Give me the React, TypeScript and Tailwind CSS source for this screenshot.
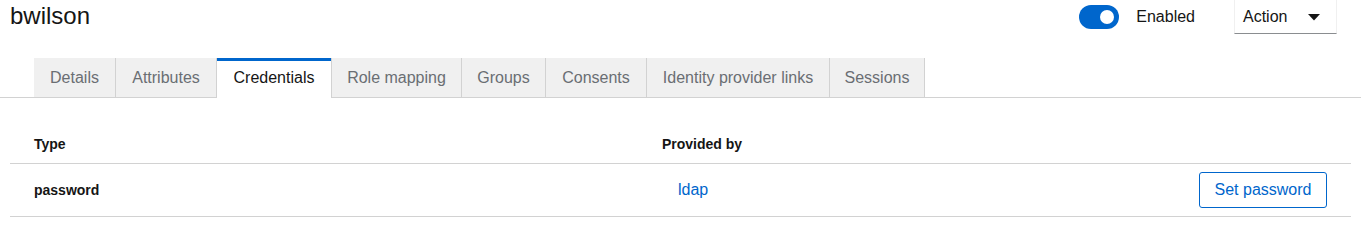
const tabs = [
  { label: "Details", w: "w-[82px]" },
  { label: "Attributes", w: "w-[101px]" },
  { label: "Credentials", w: "w-[115px]" },
  { label: "Role mapping", w: "w-[130px]" },
  { label: "Groups", w: "w-[84px]" },
  { label: "Consents", w: "w-[101px]" },
  { label: "Identity provider links", w: "w-[183px]" },
  { label: "Sessions", w: "w-[95px]" },
];

const font = { fontFamily: '"Liberation Sans", Arial, sans-serif' };

export default function App() {
  const active = "Credentials";

  return (
    <div className="w-[1361px] h-[250px] overflow-hidden bg-white text-[#151515]" style={font}>
      {/* page header */}
      <div className="-mt-[3px] flex items-center h-[37px] pl-[10px] pr-6">
        <h1 className="text-[24px] leading-none">bwilson</h1>
        <div className="ml-auto flex items-center mt-[3px]">
          <span className="relative inline-flex w-[40px] h-[24px] rounded-full bg-[#0066cc]">
            <span className="absolute right-[5px] top-[5px] w-[14px] h-[14px] rounded-full bg-white" />
          </span>
          <span className="ml-[17px] text-[16px]">Enabled</span>
        </div>
        <button
          type="button"
          className="ml-[39px] flex items-center w-[103px] h-[37px] pl-2 pt-[4px] border-l border-r border-[#f0f0f0] border-b border-b-[#8a8d90] text-[16px]"
        >
          <span>Action</span>
          <svg className="ml-auto mr-[16px] w-[12px] h-[7px]" viewBox="0 0 12 7">
            <path d="M0 0 L12 0 L6 6.5 Z" fill="#151515" />
          </svg>
        </button>
      </div>

      {/* tabs */}
      <div className="mt-[24px] flex items-start pl-[34px] border-b border-[#d2d2d2] h-[40px]">
        {tabs.map((t) => {
          const isActive = t.label === active;
          return (
            <div
              key={t.label}
              className={
                isActive
                  ? `relative flex items-center justify-center ${t.w} h-[40px] bg-white border-r border-[#d2d2d2] text-[16px] text-[#151515]`
                  : `flex items-center justify-center ${t.w} h-[39px] bg-[#f0f0f0] border-r border-[#d2d2d2] text-[16px] text-[#6a6e73]`
              }
            >
              {isActive && <span className="absolute left-0 right-0 top-0 h-[3px] bg-[#0066cc]" />}
              <span className={isActive ? "mb-px" : ""}>{t.label}</span>
            </div>
          );
        })}
      </div>

      {/* credentials table */}
      <div className="mt-[27px] mx-[10px]">
        <div className="grid grid-cols-[652px_1fr] items-center h-[39px] border-b border-[#d2d2d2] text-[14px] font-bold">
          <div className="pl-6">Type</div>
          <div>Provided by</div>
        </div>
        <div className="grid grid-cols-[652px_1fr_auto] items-center h-[53px] border-b border-[#d2d2d2] text-[14px]">
          <div className="pl-6 font-bold">password</div>
          <div>
            <button type="button" className="pl-4 text-[#0066cc] text-[16px]">
              ldap
            </button>
          </div>
          <div className="pr-6">
            <button
              type="button"
              className="w-[128px] h-[36px] rounded-[3px] border border-[#0066cc] text-[#0066cc] text-[16px]"
            >
              Set password
            </button>
          </div>
        </div>
      </div>
    </div>
  );
}
